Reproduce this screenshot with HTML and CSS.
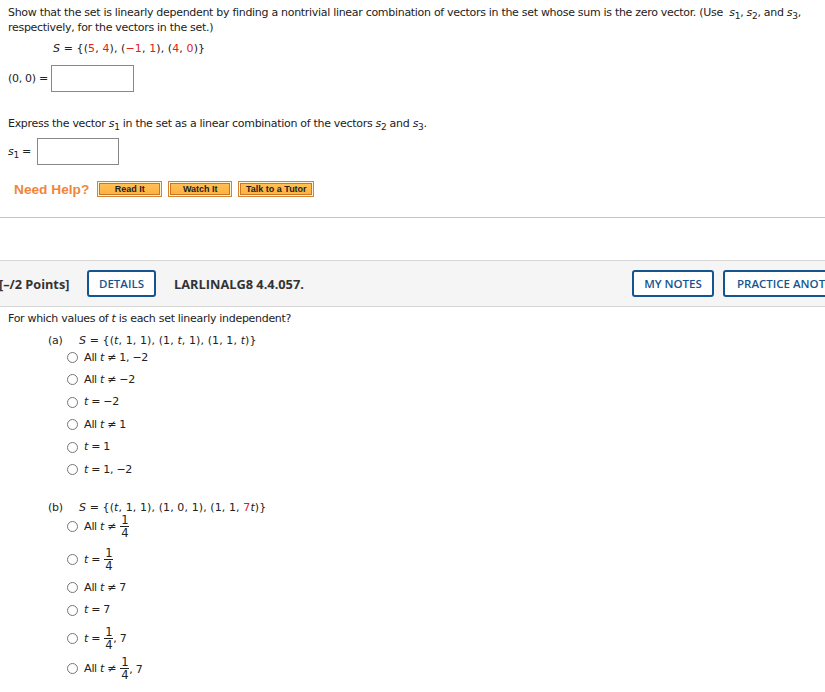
FILE: index.html
```html
<!DOCTYPE html>
<html>
<head>
<meta charset="utf-8">
<link rel="stylesheet" href="styles.css">
</head>
<body>
<div class="q1">
  <p class="intro">Show that the set is linearly dependent by finding a nontrivial linear combination of vectors in the set whose sum is the zero vector. (Use&nbsp; <i>s</i><sub>1</sub>, <i>s</i><sub>2</sub>, and <i>s</i><sub>3</sub>, respectively, for the vectors in the set.)</p>
  <div class="setline math"><i>S</i> = {(<span class="red">5</span>, <span class="red">4</span>), (<span class="red">&minus;1</span>, <span class="red">1</span>), (<span class="red">4</span>, <span class="red">0</span>)}</div>
  <div class="answer"><span>(0, 0) =</span><span class="box box1"></span></div>
  <p class="express">Express the vector <i>s</i><sub>1</sub> in the set as a linear combination of the vectors <i>s</i><sub>2</sub> and <i>s</i><sub>3</sub>.</p>
  <div class="answer a2"><span><i>s</i><sub>1</sub> =</span><span class="box box2"></span></div>
  <div class="help">
    <span class="needhelp">Need Help?</span>
    <span class="hbtn w65">Read It</span>
    <span class="hbtn w64">Watch It</span>
    <span class="hbtn w75">Talk to a Tutor</span>
  </div>
</div>
<hr class="sep">
<div class="header">
  <span class="points">[&ndash;/2 Points]</span>
  <span class="obtn details">DETAILS</span>
  <span class="code">LARLINALG8 4.4.057.</span>
  <span class="spacer"></span>
  <span class="obtn notes">MY NOTES</span>
  <span class="obtn practice">PRACTICE ANOTHER</span>
</div>
<div class="q2">
  <p class="ask">For which values of <i>t</i> is each set linearly independent?</p>
  <div class="part">
    <div class="ptitle"><span class="plabel">(a)</span><span class="math"><i>S</i> = {(<i>t</i>, 1, 1), (1, <i>t</i>, 1), (1, 1, <i>t</i>)}</span></div>
    <ul class="opts">
      <li><span class="radio"></span><span class="lbl"><span class="sans">All</span> <i>t</i> &ne; 1, &minus;2</span></li>
      <li><span class="radio"></span><span class="lbl"><span class="sans">All</span> <i>t</i> &ne; &minus;2</span></li>
      <li><span class="radio"></span><span class="lbl"><i>t</i> = &minus;2</span></li>
      <li><span class="radio"></span><span class="lbl"><span class="sans">All</span> <i>t</i> &ne; 1</span></li>
      <li><span class="radio"></span><span class="lbl"><i>t</i> = 1</span></li>
      <li><span class="radio"></span><span class="lbl"><i>t</i> = 1, &minus;2</span></li>
    </ul>
  </div>
  <div class="part partb">
    <div class="ptitle"><span class="plabel">(b)</span><span class="math"><i>S</i> = {(<i>t</i>, 1, 1), (1, 0, 1), (1, 1, <span class="red">7</span><i>t</i>)}</span></div>
    <ul class="opts">
      <li class="tall"><span class="radio"></span><span class="lbl"><span class="sans">All</span> <i>t</i> &ne; <span class="frac"><span class="num">1</span><span class="den">4</span></span></span></li>
      <li class="tall"><span class="radio"></span><span class="lbl"><i>t</i> = <span class="frac"><span class="num">1</span><span class="den">4</span></span></span></li>
      <li><span class="radio"></span><span class="lbl"><span class="sans">All</span> <i>t</i> &ne; 7</span></li>
      <li><span class="radio"></span><span class="lbl"><i>t</i> = 7</span></li>
      <li class="tall"><span class="radio"></span><span class="lbl"><i>t</i> = <span class="frac"><span class="num">1</span><span class="den">4</span></span><span class="after">, 7</span></span></li>
      <li class="tall"><span class="radio"></span><span class="lbl"><span class="sans">All</span> <i>t</i> &ne; <span class="frac"><span class="num">1</span><span class="den">4</span></span><span class="after">, 7</span></span></li>
    </ul>
  </div>
</div>
</body>
</html>
```

FILE: styles.css
```css
html, body {
  margin: 0;
  padding: 0;
  background: #fff;
}
body {
  font-family: "DejaVu Sans", Verdana, sans-serif;
  font-size: 11px;
  letter-spacing: -0.3px;
  color: #222;
  overflow: hidden;
  width: 825px;
}
p { margin: 0; }
i { font-style: italic; }
sub {
  font-size: 9px;
  vertical-align: -3px;
  line-height: 0;
}
.red { color: #e0201c; }
.math { letter-spacing: 0.1px; }

.q1 {
  padding: 5px 8px 0 8px;
}
.intro {
  line-height: 15px;
}
.setline {
  margin: 6px 0 0 45px;
  line-height: 16px;
}
.answer {
  display: flex;
  align-items: center;
  gap: 3px;
  margin-top: 8px;
  height: 27px;
}
.box {
  display: block;
  height: 25px;
  border: 1px solid #888;
  background: #fff;
}
.box1 { width: 81px; }
.box2 { width: 80px; }
.a2 { margin-top: 6px; gap: 6px; }
.express {
  margin-top: 24px;
  line-height: 16px;
}
.help {
  display: flex;
  align-items: center;
  margin: 16px 0 0 6px;
  height: 16px;
  letter-spacing: 0;
}
.needhelp {
  font-family: "Liberation Sans", Arial, sans-serif;
  font-weight: bold;
  font-size: 13.7px;
  color: #f0863a;
  margin-right: 8px;
}
.hbtn {
  box-sizing: border-box;
  height: 16px;
  margin-right: 6px;
  border: 1px solid #d8822c;
  box-shadow: inset 0 0 0 1px #fff4d8, inset 0 0 0 2px #c8762a;
  background: linear-gradient(#ffc35c, #ffae3a);
  font-family: "Liberation Sans", Arial, sans-serif;
  font-weight: bold;
  font-size: 9px;
  color: #222;
  display: flex;
  align-items: center;
  justify-content: center;
}
.w65 { width: 65px; }
.w64 { width: 64px; }
.w75 { width: 76px; }

.sep {
  margin: 20px 0 0 0;
  border: 0;
  border-top: 1px solid #c4c4c4;
  height: 0;
}

.header {
  margin-top: 42px;
  height: 45px;
  border-top: 1px solid #d6d6d6;
  border-bottom: 1px solid #d6d6d6;
  background: #f5f5f5;
  display: flex;
  align-items: center;
  font-family: "Open Sans", sans-serif;
  letter-spacing: 0;
  white-space: nowrap;
}
.points {
  font-weight: bold;
  font-size: 12.7px;
  color: #333;
  margin-left: -1px;
  width: 88px;
  flex: none;
}
.obtn {
  box-sizing: border-box;
  height: 27px;
  border: 2px solid #14558f;
  border-radius: 3px;
  background: #fff;
  color: #14558f;
  font-weight: 600;
  font-size: 11.5px;
  display: flex;
  align-items: center;
  justify-content: center;
  flex: none;
}
.details { width: 69px; }
.code {
  font-weight: bold;
  font-size: 12.8px;
  color: #333;
  margin-left: 18px;
}
.spacer { flex: 1; }
.notes { width: 82px; margin-right: 9px; }
.practice { width: 150px; justify-content: flex-start; padding-left: 12px; margin-right: -48px; }

.q2 {
  padding: 4px 8px 0 8px;
}
.ask { line-height: 16px; }
.part { margin: 6px 0 0 40px; }
.partb { margin-top: 22px; }
.ptitle {
  line-height: 16px;
  display: flex;
}
.plabel { width: 31px; }
.opts {
  list-style: none;
  margin: 0 0 0 19px;
  padding: 0;
}
.opts li {
  display: flex;
  align-items: center;
  height: 16px;
  margin-bottom: 6.5px;
}
.opts li.tall { height: 27px; }
.opts li.tall:last-child { margin-top: -3px; }
.partb .ptitle { margin-bottom: -3px; }
.radio {
  box-sizing: border-box;
  width: 11px;
  height: 11px;
  border: 1px solid #767676;
  border-radius: 50%;
  background: #fff;
  margin-right: 6px;
  flex: none;
}
.lbl {
  display: inline;
  white-space: nowrap;
  line-height: 16px;
}
.sans {
  font-family: "Liberation Sans", Arial, sans-serif;
  font-size: 11.5px;
  letter-spacing: 0;
}
.frac {
  display: inline-flex;
  flex-direction: column;
  align-items: center;
  vertical-align: middle;
  line-height: 12px;
  font-size: 11.5px;
  margin-left: 1px;
}
.frac .num {
  border-bottom: 1px solid #222;
  padding: 0 1px;
}
.frac .den { padding: 0 1px; }
.after { position: relative; top: 1px; }
```
